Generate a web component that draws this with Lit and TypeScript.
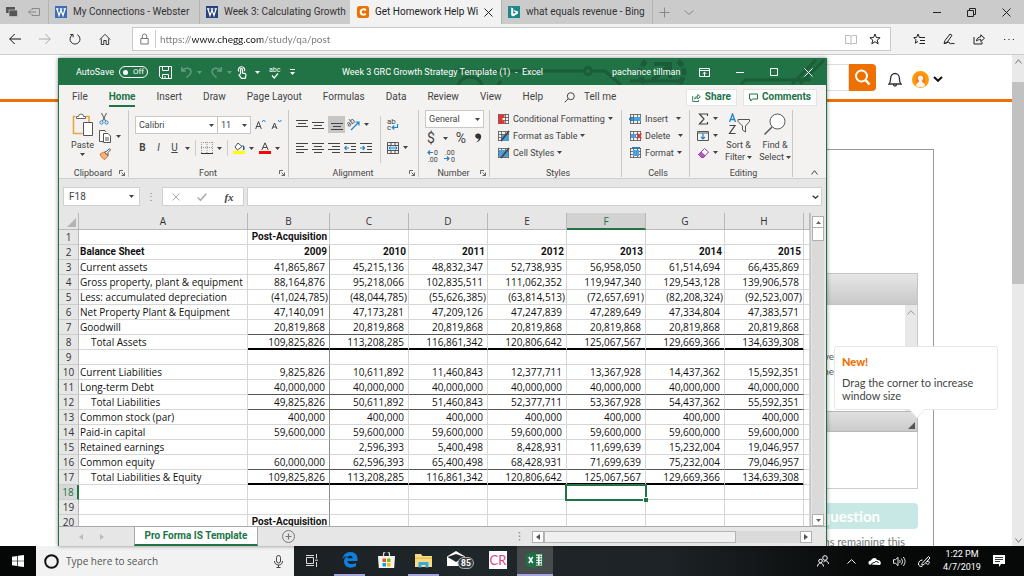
import { LitElement, html, css, svg, nothing } from "lit";
import { customElement } from "lit/decorators.js";
import { classMap } from "lit/directives/class-map.js";

type Row = { n: number; label?: string; bold?: boolean; indent?: boolean; vals?: string[]; line?: "thin" | "thick" };

const COLS = ["A", "B", "C", "D", "E", "F", "G", "H"];
const ROWS: Row[] = [
  { n: 1, bold: true, vals: ["Post-Acquisition"] },
  { n: 2, bold: true, label: "Balance Sheet", vals: ["2009", "2010", "2011", "2012", "2013", "2014", "2015"] },
  { n: 3, label: "Current assets", vals: ["41,865,867", "45,215,136", "48,832,347", "52,738,935", "56,958,050", "61,514,694", "66,435,869"] },
  { n: 4, label: "Gross property, plant & equipment", vals: ["88,164,876", "95,218,066", "102,835,511", "111,062,352", "119,947,340", "129,543,128", "139,906,578"] },
  { n: 5, label: "Less: accumulated depreciation", vals: ["(41,024,785)", "(48,044,785)", "(55,626,385)", "(63,814,513)", "(72,657,691)", "(82,208,324)", "(92,523,007)"] },
  { n: 6, label: "Net Property Plant & Equipment", vals: ["47,140,091", "47,173,281", "47,209,126", "47,247,839", "47,289,649", "47,334,804", "47,383,571"] },
  { n: 7, label: "Goodwill", line: "thin", vals: ["20,819,868", "20,819,868", "20,819,868", "20,819,868", "20,819,868", "20,819,868", "20,819,868"] },
  { n: 8, label: "Total Assets", indent: true, line: "thick", vals: ["109,825,826", "113,208,285", "116,861,342", "120,806,642", "125,067,567", "129,669,366", "134,639,308"] },
  { n: 9 },
  { n: 10, label: "Current Liabilities", vals: ["9,825,826", "10,611,892", "11,460,843", "12,377,711", "13,367,928", "14,437,362", "15,592,351"] },
  { n: 11, label: "Long-term Debt", line: "thin", vals: ["40,000,000", "40,000,000", "40,000,000", "40,000,000", "40,000,000", "40,000,000", "40,000,000"] },
  { n: 12, label: "Total Liabilities", indent: true, line: "thin", vals: ["49,825,826", "50,611,892", "51,460,843", "52,377,711", "53,367,928", "54,437,362", "55,592,351"] },
  { n: 13, label: "Common stock (par)", vals: ["400,000", "400,000", "400,000", "400,000", "400,000", "400,000", "400,000"] },
  { n: 14, label: "Paid-in capital", vals: ["59,600,000", "59,600,000", "59,600,000", "59,600,000", "59,600,000", "59,600,000", "59,600,000"] },
  { n: 15, label: "Retained earnings", vals: ["", "2,596,393", "5,400,498", "8,428,931", "11,699,639", "15,232,004", "19,046,957"] },
  { n: 16, label: "Common equity", line: "thin", vals: ["60,000,000", "62,596,393", "65,400,498", "68,428,931", "71,699,639", "75,232,004", "79,046,957"] },
  { n: 17, label: "Total Liabilities & Equity", indent: true, line: "thick", vals: ["109,825,826", "113,208,285", "116,861,342", "120,806,642", "125,067,567", "129,669,366", "134,639,308"] },
  { n: 18 },
  { n: 19 },
  { n: 20, bold: true, vals: ["Post-Acquisition"] },
];

const ico = (w: number, h: number, body: unknown) =>
  html`<svg class="ico" width=${w} height=${h} viewBox="0 0 ${w} ${h}" fill="none" stroke="currentColor" stroke-width="1" aria-hidden="true">${body}</svg>`;

const caret = () => ico(5, 3, svg`<path d="M0 0h5L2.5 3z" fill="currentColor" stroke="none"/>`);
const launcher = () => ico(6, 6, svg`<path d="M.5 4V.5H4M2.500 2.500l3 3M5.500 2.500v3h-3" stroke-width=".8"/>`);
const chevron = (w = 8, h = 5, up = false) =>
  ico(w, h, up ? svg`<path d="M.5 ${h - 0.5}L${w / 2} .7 ${w - 0.5} ${h - 0.5}"/>` : svg`<path d="M.5 .5L${w / 2} ${h - 0.7} ${w - 0.5} .5"/>`);
const cross = (s = 8) => ico(s, s, svg`<path d="M.5 .5l${s - 1} ${s - 1}M${s - 0.5} .5L.5 ${s - 0.5}"/>`);
const grid = (extra: unknown) => ico(13, 12, svg`<path d="M1 1.500h11M1 4.500h11M1 7.500h11M1 10.500h11M1.500 1v10M4.500 1v10M8.500 1v10M11.500 1v10" stroke="#555" stroke-width=".8"/>${extra}`);
const lines = (d: string) => ico(12, 12, svg`<path d=${d} stroke="#444"/>`);

const base = css`
  :host { box-sizing: border-box; font-family: Roboto, "Open Sans", sans-serif; font-size: 10px; line-height: 12px; }
  *, *::before, *::after { box-sizing: border-box; }
  button, input, select { font: inherit; color: inherit; background: none; border: 0; padding: 0; margin: 0; border-radius: 0; outline: 0; }
  button { display: flex; align-items: center; justify-content: center; white-space: nowrap; }
  a { color: inherit; text-decoration: none; }
  .ico { display: block; flex: none; }
`;

@customElement("edge-chrome")
export class EdgeChrome extends LitElement {
  static styles = [base, css`
    :host { display: block; color: #222; }
    .tabs { display: flex; height: 24px; background: #cbcbcb; }
    .lead { display: flex; width: 48px; padding-left: 6px; gap: 10px; align-items: center; color: #555; }
    .lead button:last-child { color: #888; }
    .tab { display: flex; align-items: center; gap: 6px; width: 151px; padding: 0 0 0 6px; border-left: 1px solid #b4b4b4; color: #333; }
    .tab .name { flex: 1; white-space: nowrap; }
    .tab.on { background: #f2f2f2; border-left-color: #f2f2f2; color: #222; padding-right: 8px; }
    .new { display: flex; gap: 14px; align-items: center; padding-left: 6px; border-left: 1px solid #b4b4b4; color: #888; flex: 1; }
    .win { display: flex; align-items: center; gap: 26px; padding-right: 13px; color: #222; }
    .bar { display: flex; align-items: center; height: 31px; background: #f2f2f2; border-bottom: 1px solid #ccc; color: #333; }
    .nav { display: flex; width: 132px; padding-left: 9px; gap: 18px; align-items: center; }
    .nav .off { color: #aaa; }
    .addr { flex: 1; display: flex; align-items: center; height: 24px; background: #fff; border: 1px solid #c9c9c9; padding: 0 9px 0 7px; gap: 6px; }
    .addr .sep { width: 1px; height: 18px; background: #ccc; }
    .addr input { flex: 1; min-width: 0; margin-left: -2px; height: 20px; font-family: Lato, sans-serif; color: transparent; background: linear-gradient(90deg, #777 0 32px, #111 32px 103px, #777 103px); background-clip: text; -webkit-background-clip: text; }
    .addr .faint { color: #bbb; }
    .addr .star { margin-left: 6px; }
    .tools { display: flex; gap: 18px; padding: 0 9px 0 22px; align-items: center; }
  `];
  render() {
    const wiki = svg`<rect width="12" height="12" fill="#3c6eb4" stroke="none"/>`;
    const W = svg`<path d="M2 3l2 6.500 2-5.500 2 5.500L10 3M1 2.800h2.500M4.800 2.800h2.500M8.600 2.800H11" stroke="#fff" stroke-width="1.200"/>`;
    return html`
      <nav class="tabs">
        <div class="lead">
          <button aria-label="Tabs set aside">${ico(12, 10, svg`<rect x="0" y="0" width="9" height="6" fill="currentColor" stroke="none"/><rect x="3" y="3" width="8.500" height="6.500" fill="currentColor" stroke="#cbcbcb" stroke-width=".7"/>`)}</button>
          <button aria-label="Set aside">${ico(12, 10, svg`<path d="M4 3V1.500h7.500v7H4V7M.5 5H8M2.800 2.800L.6 5l2.200 2.200"/>`)}</button>
        </div>
        <div class="tab">${ico(12, 12, svg`${wiki}${W}`)}<span class="name">My Connections - Webster</span></div>
        <div class="tab">${ico(12, 12, svg`<rect width="12" height="12" fill="#27407f" stroke="none"/>${W}`)}<span class="name">Week 3: Calculating Growth</span></div>
        <div class="tab on">${ico(12, 12, svg`<rect width="12" height="12" rx="2.500" fill="#eb7100" stroke="none"/><path d="M8.800 4.300C7.600 2.700 3.700 2.900 3.700 6s3.900 3.300 5.100 1.700" stroke="#fff" stroke-width="2"/>`)}<span class="name">Get Homework Help Wi</span><button aria-label="Close tab">${cross(9)}</button></div>
        <div class="tab">${ico(12, 12, svg`<rect width="12" height="12" fill="#19898a" stroke="none"/><path d="M3.200 1.500l2 .7v5.600L8 6.400 6 5.300l-.5-1.300L10 5.600v2L5.200 10.500l-2-1.200z" fill="#fff" stroke="none"/>`)}<span class="name">what equals revenue - Bing</span></div>
        <div class="new"><button aria-label="New tab">${ico(11, 11, svg`<path d="M5.500 .5v10M.5 5.500h10"/>`)}</button><button aria-label="Tab previews">${chevron(10, 5)}</button></div>
        <div class="win">
          <button aria-label="Minimize">${ico(8, 8, svg`<path d="M0 4.500h8"/>`)}</button>
          <button aria-label="Restore">${ico(9, 9, svg`<path d="M.5 2.500h6v6h-6zM2.500 2V.5h6v6H7"/>`)}</button>
          <button aria-label="Close">${cross(9)}</button>
        </div>
      </nav>
      <div class="bar">
        <div class="nav">
          <button aria-label="Back">${ico(12, 12, svg`<path d="M.7 6H12M5.700 1L.7 6l5 5" stroke="#111"/>`)}</button>
          <button class="off" aria-label="Forward">${ico(12, 12, svg`<path d="M0 6h11.300M6.300 1l5 5-5 5"/>`)}</button>
          <button aria-label="Refresh">${ico(12, 12, svg`<path d="M8.200 1.600a5 5 0 1 1-4.400 0M1.200 1.500h2.900v2.800" stroke="#333"/>`)}</button>
          <button aria-label="Home">${ico(12, 12, svg`<path d="M.8 6.500L6 1.300l5.200 5.200M2.300 5.500v6h2.500V7.500h2.400v4h2.500v-6" stroke="#333"/>`)}</button>
        </div>
        <div class="addr">
          ${ico(9, 12, svg`<path d="M.8 5.500h7.400v5.500H.8zM2.300 5.500V3.200a2.200 2.200 0 0 1 4.400 0v2.300" stroke="#777"/>`)}
          <span class="sep"></span>
          <input aria-label="Address" value="https://www.chegg.com/study/qa/post" />
          <button class="faint" aria-label="Reading view">${ico(12, 11, svg`<path d="M.5 1.500h4L6 2.200l1.500-.7h4v8h-4l-1.500.7-1.500-.7h-4zM6 2.200v8"/>`)}</button>
          <button class="star" aria-label="Add to favorites">${ico(12, 12, svg`<path d="M6 1l1.400 3.500 3.700.2-2.900 2.400 1 3.700L6 8.700l-3.200 2.100 1-3.700L.9 4.700l3.700-.2z" stroke="#222"/>`)}</button>
        </div>
        <div class="tools">
          <button aria-label="Favorites">${ico(12, 12, svg`<path d="M8 4.500L6.300 4.300 5 1 3.700 4.300.8 4.600 3 6.800l-.7 3.400L5 8.500M6.500 4.500H12M7 7.500h5M6.500 10.500H12" stroke="#222"/>`)}</button>
          <button aria-label="Notes">${ico(12, 12, svg`<path d="M1 10.500l1-3L7 1l2 1.300L4.300 9 1 10.500c2 .6 4-1.800 5-1.400s0 1.700 1.200 1.700S9 10 11.500 10.700" stroke="#222"/>`)}</button>
          <button aria-label="Share">${ico(12, 12, svg`<path d="M1 4v7h8V9M3.500 8c.3-3 2-4 4.300-4V1.800l3.700 3.400-3.700 3.400V6.500C6 6.500 4.500 7 3.500 8z" stroke="#222"/>`)}</button>
          <button aria-label="More">${ico(12, 3, svg`<path d="M1 1.500h1.200M5.400 1.500h1.200M9.800 1.500H11"/>`)}</button>
        </div>
      </div>`;
  }
}

@customElement("chegg-page")
export class CheggPage extends LitElement {
  static styles = [base, css`
    :host { display: flex; background: #fff; overflow: hidden; font-family: Lato, sans-serif; font-size: 11px; }
    main { flex: 1; min-width: 0; }
    header { display: flex; align-items: center; justify-content: flex-end; height: 47px; padding: 1px 69px 0 0; border-bottom: 3px solid #ed7000; }
    .find { display: flex; height: 27px; width: 500px; }
    .find input { flex: 1; border: 1px solid #ddd; }
    .find button { width: 27px; background: #ed7000; border-radius: 0 4px 4px 0; }
    .bell { margin: 4px 0 0 12px; }
    .user { margin: 3px 0 0 10px; gap: 4px; color: #111; }
    .card { margin: 47px 78px 0 90px; height: 420px; border: 1px solid #999; padding: 123px 15px 0 0; }
    .bar { height: 32px; border: 1px solid #c4c4c4; background: linear-gradient(#e6e6e6, #c9c9c9); }
    .edit { display: flex; height: 106px; border-right: 1px solid #ccc; }
    .edit p { flex: 1; margin: 44px 71px 0 0; text-align: right; line-height: 15px; font-size: 10px; color: #555; }
    .sb { width: 12px; background: #e8e8e8; padding: 5px 2px; color: #999; }
    .grip { display: flex; align-items: flex-end; justify-content: flex-end; height: 21px; padding: 2px; border: 1px solid #b8b8b8; border-width: 1px 1px 1px 0; background: linear-gradient(#e0e0e0, #cbcbcb); color: #555; }
    .out { height: 57px; border: 1px solid #ccc; border-top: 0; }
    .ask { width: 100%; height: 26px; margin-top: 14px; padding-right: 38px; justify-content: flex-end; background: #c8e8e6; border-radius: 4px; color: #fff; font-weight: 700; font-size: 15px; line-height: 20px; }
    .left { margin: 7px 13px 0 0; text-align: right; color: #777; }
    .scroll { width: 12px; background: #e9e9e9; display: flex; flex-direction: column; align-items: center; color: #777; padding: 4px 0 3px; gap: 18px; }
    .thumb { width: 12px; height: 202px; background: #c1c1c1; }
    .scroll > :last-child { margin-top: auto; }
  `];
  render() {
    return html`
      <main>
        <header>
          <div class="find"><input aria-label="Search" /><button aria-label="Search">${ico(17, 17, svg`<circle cx="7.500" cy="7" r="5.500" stroke="#fff" stroke-width="2"/><path d="M11.500 11l4 4.500" stroke="#fff" stroke-width="2.500"/>`)}</button></div>
          <button class="bell" aria-label="Notifications">${ico(14, 15, svg`<path d="M1 12h12c-1.500-1.500-1.600-2.500-1.600-5.500C11.400 3.500 9.500 1.500 7 1.500S2.600 3.500 2.600 6.500C2.600 9.500 2.500 10.500 1 12zM5.500 12.500a1.500 1.500 0 0 0 3 0" stroke="#333" stroke-width="1.300"/>`)}</button>
          <button class="user" aria-label="Account">${ico(17, 17, svg`<circle cx="8.500" cy="8.500" r="8.500" fill="#ff9a05" stroke="none"/><path d="M4 14.500V8a4.500 4.500 0 0 1 9 0v6.500z" fill="#f47a2a" stroke="none"/><path d="M8.500 4.500a2.700 2.700 0 0 1 1.600 4.900v1.500l2 1.400c.6.500.9 2 .9 2.600-2.800 1.700-6.200 1.700-9 0 0-.6.300-2.100.9-2.600l2-1.400V9.400a2.700 2.700 0 0 1 1.600-4.900z" fill="#fff4e2" stroke="none"/>`)}${ico(10, 6, svg`<path d="M1 1l4 3.800L9 1" stroke-width="2"/>`)}</button>
        </header>
        <section class="card">
          <div class="bar"></div>
          <div class="edit"><p>Explain how we<br />arrived at the ne</p><div class="sb">${chevron(8, 5, true)}</div></div>
          <div class="grip">${ico(7, 7, svg`<path d="M7 0v7H0z" fill="currentColor" stroke="none"/>`)}</div>
          <div class="out"></div>
          <button class="ask">Submit question</button>
          <div class="left">questions remaining this</div>
        </section>
      </main>
      <div class="scroll">${chevron(7, 5, true)}<div class="thumb"></div>${chevron(7, 5)}</div>`;
  }
}

@customElement("excel-window")
export class ExcelWindow extends LitElement {
  static styles = [base, css`
    :host { display: flex; flex-direction: column; background: #e6e6e6; border: 1px solid #217346; border-bottom: 0; box-shadow: 0 0 4px rgba(0, 0, 0, .45); color: #444; overflow: hidden; }
    .title { position: relative; display: flex; align-items: center; height: 26px; background: #217346; color: #fff; font-size: 9px; }
    .deco { position: absolute; right: 0; top: 0; }
    .title > :not(.deco) { position: relative; }
    .quick { display: flex; align-items: center; padding-left: 17px; width: 283px; gap: 9px; }
    .quick .dim { opacity: .3; }
    .quick .pair { gap: 5px; }
    .quick .touch { margin-left: -4px; gap: 8px; }
    .toggle { margin: 0 2px 0 -4px; width: 29px; height: 12px; border: 1px solid #fff; border-radius: 6px; gap: 5px; font-size: 8px; line-height: 10px; }
    .doc { width: 270px; white-space: pre; }
    .user { flex: 1; white-space: nowrap; }
    .ctl { display: flex; gap: 26px; padding-right: 13px; }
    .menu { display: flex; align-items: center; height: 24px; padding: 0 9px 0 13px; background: #f3f2f1; gap: 21px; }
    .menu button { height: 22px; }
    .menu .on { color: #217346; font-weight: 700; border-bottom: 2px solid #217346; height: 18px; margin-top: 2px; }
    .menu .tell { gap: 9px; }
    .menu .act { height: 17px; padding: 0 5px; background: #fff; border: 1px solid #e4e4e4; color: #217346; font-weight: 700; gap: 4px; }
    .menu .acts { display: flex; gap: 6px; margin-left: auto; }
    .ribbon { display: flex; height: 70px; padding-top: 1px; background: #f3f2f1; border-bottom: 1px solid #d0d0d0; font-size: 9px; line-height: 12px; }
    .grp { display: flex; flex-direction: column; justify-content: space-between; border-right: 1px solid #c8c8c8; margin-bottom: 1px; }
    .grp footer { display: flex; align-items: center; justify-content: center; height: 8px; line-height: 8px; padding: 0 3px 0 8px; }
    .grp footer span { flex: 1; text-align: center; }
    .body { display: flex; flex: 1; min-height: 0; }
    .col { display: flex; flex-direction: column; align-items: flex-start; }
    .row { display: flex; align-items: center; }
    .clip { width: 70px; } .font { width: 160px; } .align { width: 130px; } .num { width: 71px; } .sty { width: 132px; } .cells { width: 68px; } .edit { width: 103px; }
    .clip .body { padding: 3px 0 0 12px; gap: 5px; }
    .paste { flex-direction: column; gap: 2px; justify-content: flex-start; height: 50px; }
    .clip .col { gap: 5px; }
    .drop { gap: 4px; }
    .combo { display: flex; align-items: center; height: 18px; padding: 0 3px; background: #fff; border: 1px solid #c8c8c8; }
    .combo select { flex: 1; min-width: 0; width: 0; appearance: none; }
    .font .col { padding: 6px 0 0 6px; gap: 6px; }
    .font .name { width: 83px; } .font .size { width: 34px; margin-left: -1px; }
    .font .grow, .font .shrink { margin-left: 4px; }
    .fmt { gap: 5px; padding-left: 2px; height: 16px; font-size: 10px; }
    .fmt .ch { width: 11px; }
    .sep { width: 1px; height: 16px; background: #ccc; }
    .align .body { padding: 6px 0 6px 7px; }
    .align .col { gap: 6px; }
    .align .row { gap: 4px; height: 17px; }
    .align .hot { background: #c6c6c6; width: 17px; height: 17px; margin: 0 -2px 0 0; }
    .align .side { border-left: 1px solid #ccc; padding-left: 6px; margin-left: 8px; }
    .num .body { padding: 0 0 0 6px; }
    .num .col { gap: 3px; }
    .num .combo { width: 59px; }
    .num .row { width: 57px; justify-content: space-between; font-size: 14px; line-height: 14px; height: 14px; padding-left: 2px; }
    .num .dec { justify-content: flex-start; gap: 4px; }
    .list { gap: 4px; padding: 2px 0 0 7px; }
    .list button { height: 13px; gap: 3px; }
    .edit .list { padding: 2px 0 0 7px; }
    .edit .body { gap: 7px; }
    .tall { flex-direction: column; gap: 4px; height: 52px; padding-top: 3px; justify-content: flex-start; line-height: 12px; }
    .tall .row { gap: 2px; }
    .end { flex: 1; display: flex; align-items: flex-end; justify-content: flex-end; padding: 0 8px 3px 0; }
    .fx { display: flex; height: 34px; padding: 8px 4px 7px 4px; gap: 4px; }
    .fx .box { display: flex; align-items: center; height: 19px; background: #fff; border: 1px solid #d0d0d0; }
    .fx .nm { width: 77px; padding: 0 5px; }
    .fx .nm input, .fx .formula input { flex: 1; min-width: 0; width: 0; }
    .fx .dots { width: 14px; text-align: center; line-height: 19px; color: #888; }
    .fx .btns { width: 82px; gap: 17px; justify-content: center; color: #aaa; }
    .fx .btns button:last-child { color: #444; font-family: "Liberation Serif", serif; font-style: italic; font-weight: 700; font-size: 11px; }
    .fx .formula { flex: 1; padding-right: 2px; margin-left: -1px; }
    .sheet { display: flex; flex: 1; min-height: 0; overflow: hidden; }
    .cellsbox { flex: 1; min-width: 0; overflow: hidden; background: #e6e6e6; border-right: 1px solid #c4c4c4; }
    table { width: 100%; table-layout: fixed; border-collapse: separate; border-spacing: 0; color: #111; font-family: "Open Sans", sans-serif; line-height: 14px; }
    .c0 { width: 20px; } .cB { width: 82px; } .cN { width: 79px; } .cZ { width: 6px; }
    th, td { height: 15px; padding: 0; border: 0 solid #d6d6d6; border-width: 0 1px 1px 0; white-space: nowrap; }
    td { background: #fff; text-align: right; padding-right: 4px; }
    th { background: #e6e6e6; border-color: #b8b8b8; font-weight: 400; color: #333; text-align: center; }
    thead th { height: 17px; }
    tbody th { border-bottom-color: #cdcdcd; }
    thead .sel { background: #d2d2d2; color: #217346; border-bottom: 2px solid #217346; }
    tbody .sel { background: #d8d8d8; color: #217346; border-right: 2px solid #217346; }
    td.lab { text-align: left; padding: 0 0 0 1px; }
    td.ind { padding-left: 12px; }
    td.bold { font-family: Roboto, sans-serif; font-weight: 700; padding-right: 2px; }
    td.neg { padding-right: 1px; }
    td.frz { border-right-color: #8c8c8c; }
    td.thin { border-bottom-color: #555; }
    td.thick { border-bottom-color: #000; box-shadow: inset 0 -1px #000; }
    td.cur { position: relative; }
    td.cur::before { content: ""; position: absolute; inset: -1px -2px -2px -2px; border: 2px solid #217346; z-index: 1; }
    td.cur::after { content: ""; position: absolute; right: -3px; bottom: -3px; width: 5px; height: 5px; background: #217346; border: 1px solid #fff; border-width: 1px 0 0 1px; z-index: 2; }
    .tri { display: block; margin: 3px 2px 0 auto; }
    .vs { width: 15px; padding: 3px 2px 0 1px; display: flex; flex-direction: column; }
    .sbtn { width: 12px; height: 12px; flex: none; background: #fff; border: 1px solid #b0b0b0; color: #666; }
    .vs .thumb { height: 13px; background: #fff; border: 1px solid #b0b0b0; border-top: 0; }
    .vs .track { flex: 1; background: #dadada; }
    .foot { display: flex; align-items: center; height: 20px; border-top: 1px solid #aaa; color: #bbb; }
    .foot .arr { display: flex; width: 75px; padding-left: 20px; gap: 17px; }
    .foot .tab { width: 124px; height: 19px; background: #fff; border: 1px solid #aaa; border-top: 0; border-bottom: 2px solid #217346; color: #217346; font-weight: 700; }
    .foot .add { margin-left: 24px; color: #777; }
    .foot .hs { display: flex; align-items: center; width: 280px; margin-right: 14px; }
    .foot .dots { margin-left: auto; width: 14px; color: #999; }
    .hs .thumb { width: 192px; height: 12px; background: #f0f0f0; border: 1px solid #b4b4b4; }
    .hs .track { flex: 1; height: 12px; background: #dadada; }
  `];

  private cell(r: Row, i: number) {
    const v = r.vals?.[i] ?? "";
    return html`<td class=${classMap({ bold: !!r.bold, neg: v.startsWith("("), frz: i === 0 && r.n > 1, thin: r.line === "thin", thick: r.line === "thick", cur: r.n === 18 && i === 4 })}>${v}</td>`;
  }

  render() {
    const tabs = ["File", "Home", "Insert", "Draw", "Page Layout", "Formulas", "Data", "Review", "View", "Help"];
    const blue = "#2583c5";
    return html`
      <div class="title">
        <svg class="deco" width="380" height="26" viewBox="0 0 380 26" fill="none" stroke="#1a5d38" stroke-width="3" aria-hidden="true">
          <path d="M8 12h129M147 12h12l16 14M184 22h54" /><circle cx="142" cy="12" r="3.500" /><path d="M12 26a13 13 0 0 1 24 0M52 26l3-4" />
          <path d="M200 2c-8 7-8 16 0 24M232 2c8 7 8 16 0 24" stroke-width="5" stroke-dasharray="7 2" /><path d="M206 22l16-15M208 5h16v14" stroke-width="4" />
          <path d="M295 25l4-4h66M346 25l24-24M354 25l24-24" />
        </svg>
        <div class="quick">
          <span>AutoSave</span>
          <button class="toggle" role="switch" aria-checked="false" aria-label="AutoSave">${ico(5, 5, svg`<circle cx="2.500" cy="2.500" r="2.500" fill="#fff" stroke="none"/>`)}Off</button>
          <button aria-label="Save">${ico(13, 13, svg`<path d="M.5 .5h12v12H2.500l-2-2zM3.500 .5v4h6v-4M3.500 12.500v-4h6v4M6 10v2.500"/>`)}</button>
          <button class="pair dim" aria-label="Undo">${ico(11, 12, svg`<path d="M.8 1v4h4M1 5c3-4 9-3.500 9 1 0 2.500-2 3.500-4.500 5.500" stroke-width="1.400"/>`)}${caret()}</button>
          <button class="pair dim" aria-label="Redo">${ico(11, 12, svg`<path d="M10.200 1v4h-4M10 5C7 1 1 1.500 1 6c0 2.500 2 3.500 4.500 5.500" stroke-width="1.400"/>`)}${caret()}</button>
          <button class="pair touch" aria-label="Touch mode">${ico(10, 13, svg`<path d="M3.500 8V3.500a1 1 0 0 1 2 0V7l3 .7c.6.200.6 1 .4 2l-.7 2.600H4.500L2 9.200c.2-.8.900-.8 1.500-.2M1.700 5.500a3.200 3.200 0 1 1 5.800-.4" stroke-width="1.200"/>`)}${caret()}</button>
          <button aria-label="Spelling">${ico(12, 13, svg`<text x="0" y="5.500" font-size="7" fill="#fff" stroke="none">abc</text><path d="M3 9.500l2.200 2.500L9 7.500" stroke-width="1.200"/>`)}</button>
          <button aria-label="Customize Quick Access Toolbar">${ico(5, 6, svg`<path d="M0 .5h5"/><path d="M0 3h5L2.500 6z" fill="#fff" stroke="none"/>`)}</button>
        </div>
        <div class="doc">Week 3 GRC Growth Strategy Template (1)  -  Excel</div>
        <div class="user">pachance tillman</div>
        <div class="ctl">
          <button aria-label="Ribbon Display Options">${ico(11, 9, svg`<path d="M.5 .5h10v8H.5zM.5 2.500h10M5.500 8V4.300M3.700 5.900l1.800-1.800 1.800 1.800"/>`)}</button>
          <button aria-label="Minimize">${ico(8, 8, svg`<path d="M0 4.500h8"/>`)}</button>
          <button aria-label="Maximize">${ico(8, 8, svg`<path d="M.5 .5h7v7h-7z"/>`)}</button>
          <button aria-label="Close">${cross(9)}</button>
        </div>
      </div>
      <nav class="menu">
        ${tabs.map((t) => html`<button class=${t === "Home" ? "on" : ""}>${t}</button>`)}
        <button class="tell">${ico(11, 11, svg`<circle cx="6.800" cy="4.200" r="3.500"/><path d="M4.300 6.700L.7 10.300"/>`)}Tell me</button>
        <div class="acts">
          <button class="act">${ico(9, 9, svg`<path d="M.7 3v5.500h6V7M2.700 6c.3-2 1.300-2.700 3-2.700V1.500l2.700 2.300L5.700 6V4.700C4.500 4.700 3.500 5 2.700 6z" stroke-width=".9"/>`)}Share</button>
          <button class="act">${ico(9, 9, svg`<path d="M.5 1h8v5h-5L1.700 8V6H.5z"/>`)}Comments</button>
        </div>
      </nav>
      <div class="ribbon">
        <section class="grp clip">
          <div class="body">
            <button class="paste">${ico(23, 24, svg`<path d="M4.500 3.500H2.500v17h9M15 3.500h3V9" stroke="#e9a544" stroke-width="1.600"/><path d="M5.500 5.500V3.500h2a2.200 2.200 0 0 1 5 0h2v2z" fill="#fff" stroke="#666"/><path d="M12.500 9.500h9v13h-9z" fill="#fff" stroke="#555"/>`)}<span>Paste</span>${caret()}</button>
            <div class="col">
              <button aria-label="Cut">${ico(10, 12, svg`<path d="M2.500 0l4 8M7.500 0l-4 8" stroke="#555"/><circle cx="2.500" cy="9.500" r="1.600" stroke=${blue}/><circle cx="7.500" cy="9.500" r="1.600" stroke=${blue}/>`)}</button>
              <button class="drop" aria-label="Copy">${ico(13, 13, svg`<path d="M4.500 11.500h-4V.5H6l1 1.500" fill="#fff" stroke="#555"/><path d="M4.500 3.500H9l2.500 2.500v6.500h-7zM6 8h4M6 10h4" fill="#fff" stroke="#555"/>`)}${caret()}</button>
              <button aria-label="Format Painter">${ico(12, 12, svg`<path d="M1 6l4-2 4 4-3 3.500C4 11 1.500 8.500 1 6z" fill="#f4b183" stroke="#e07b2a"/><path d="M5.500 4L8 3l2.500-2.300L11.500 2 9 4.500 9 7.500z" fill="#fff" stroke="#555"/>`)}</button>
            </div>
          </div>
          <footer><span>Clipboard</span>${launcher()}</footer>
        </section>
        <section class="grp font">
          <div class="body col">
            <div class="row">
              <label class="combo name"><select aria-label="Font"><option>Calibri</option></select>${caret()}</label>
              <label class="combo size"><select aria-label="Font size"><option>11</option></select>${caret()}</label>
              <button class="grow" aria-label="Increase Font Size">${ico(12, 12, svg`<path d="M.7 10L3.500 2.500 6.300 10M1.800 7.500h3.500" stroke="#444"/><path d="M7 3l1.700-2 1.700 2" stroke=${blue}/>`)}</button>
              <button class="shrink" aria-label="Decrease Font Size">${ico(12, 12, svg`<path d="M1 10l2.500-6L6 10M2 8h3" stroke="#444"/><path d="M7 1l1.700 2 1.700-2" stroke=${blue}/>`)}</button>
            </div>
            <div class="row fmt">
              <button class="ch"><b>B</b></button><button class="ch"><i>I</i></button><button class="ch"><u>U</u></button>${caret()}
              <span class="sep"></span>
              <button class="drop" aria-label="Borders">${ico(12, 12, svg`<path d="M.5 0v11M6 0v11M11.500 0v11M0 .5h12M0 5.500h12" stroke="#999" stroke-dasharray="1 1"/><path d="M0 11.500h12" stroke="#333"/>`)}${caret()}</button>
              <span class="sep"></span>
              <button class="drop" aria-label="Fill Color">${ico(12, 12, svg`<path d="M5 1l4 3.500-4.500 3.500L2 5z" fill="#fff" stroke="#555"/><path d="M9.500 3.500c1.500 1 1.800 2.500 1 4.500" stroke="#1a5fa0" stroke-width="1.500"/><path d="M0 10.500h12" stroke="#ff0" stroke-width="3"/>`)}${caret()}</button>
              <button class="drop" aria-label="Font Color">${ico(12, 12, svg`<path d="M2.800 8L6 .8 9.200 8M4 5.500h4" stroke="#444"/><path d="M0 10.500h12" stroke="#f00" stroke-width="3"/>`)}${caret()}</button>
            </div>
          </div>
          <footer><span>Font</span>${launcher()}</footer>
        </section>
        <section class="grp align">
          <div class="body">
            <div class="col">
              <div class="row">
                <button aria-label="Top Align">${lines("M0 1.500h12M2 4.500h8M0 7.500h12")}</button>
                <button aria-label="Middle Align">${lines("M0 3.500h12M2 6.500h8M0 9.500h12")}</button>
                <button class="hot" aria-label="Bottom Align">${lines("M0 4.500h12M2 7.500h8M0 10.500h12")}</button>
                <button class="drop" aria-label="Orientation">${ico(13, 13, svg`<text x="0" y="7" font-size="8" fill="#444" stroke="none" transform="rotate(-38 4 6)">ab</text><path d="M4 12l8-8M8.500 4H12v3.500" stroke=${blue} stroke-width="1.200"/>`)}${caret()}</button>
              </div>
              <div class="row">
                <button aria-label="Align Left">${lines("M0 1.500h12M0 4.500h8M0 7.500h12M0 10.500h8")}</button>
                <button aria-label="Center">${lines("M0 1.500h12M2 4.500h8M0 7.500h12M2 10.500h8")}</button>
                <button aria-label="Align Right">${lines("M0 1.500h12M4 4.500h8M0 7.500h12M4 10.500h8")}</button>
                <button aria-label="Decrease Indent">${ico(12, 12, svg`<path d="M0 1.500h12M7 4.500h5M7 7.500h5M0 10.500h12" stroke="#444"/><path d="M.7 6H5M2.500 4L.7 6l1.800 2" stroke=${blue} stroke-width="1.200"/>`)}</button>
                <button aria-label="Increase Indent">${ico(12, 12, svg`<path d="M0 1.500h12M7 4.500h5M7 7.500h5M0 10.500h12" stroke="#444"/><path d="M0 6h4.500M2.800 4l1.800 2-1.800 2" stroke=${blue} stroke-width="1.200"/>`)}</button>
              </div>
            </div>
            <div class="col side">
              <div class="row"><button aria-label="Wrap Text">${ico(12, 13, svg`<text x="0" y="6" font-size="8" fill="#444" stroke="none">ab</text><text x="0" y="12" font-size="8" fill="#444" stroke="none">c</text><path d="M10.500 6v3.500H5.500M7.300 7.500l-2 2 2 2" stroke=${blue} stroke-width="1.200"/>`)}</button></div>
              <div class="row"><button class="drop" aria-label="Merge and Center">${ico(12, 12, svg`<path d="M.5 .5h11v11H.5zM.5 3.500h11M.5 8.500h11M4 0v3.500M8 0v3.500M4 8.500v3M8 8.500v3" stroke="#555"/><path d="M1 4h10v4H1z" fill="#cfe6f7" stroke="none"/><path d="M2 6h8M3.500 4.500L2 6l1.500 1.500M8.500 4.500L10 6 8.500 7.500" stroke=${blue}/>`)}${caret()}</button></div>
            </div>
          </div>
          <footer><span>Alignment</span>${launcher()}</footer>
        </section>
        <section class="grp num">
          <div class="body col">
            <label class="combo"><select aria-label="Number format"><option>General</option></select>${caret()}</label>
            <div class="row"><button>$</button>${caret()}<button>%</button><button aria-label="Comma Style">${ico(8, 12, svg`<path d="M4 1.500a2.600 2.600 0 1 0 .8 5C4.500 8.200 3.500 9.500 2 10.500c3-.8 5.200-3 5.200-6C7.200 2.700 5.800 1.500 4 1.500z" fill="#333" stroke="none"/>`)}</button></div>
            <div class="row dec">
              <button aria-label="Increase Decimal">${ico(13, 13, svg`<path d="M1 3.500h5M3 1.500l-2 2 2 2" stroke=${blue} stroke-width="1.200"/><text x="7" y="6" font-size="7" fill="#444" stroke="none">0</text><text x="1" y="12.500" font-size="7" fill="#444" stroke="none">.00</text>`)}</button>
              <button aria-label="Decrease Decimal">${ico(13, 13, svg`<text x="1" y="6" font-size="7" fill="#444" stroke="none">.00</text><path d="M0 9.500h5M3 7.500l2 2-2 2" stroke=${blue} stroke-width="1.200"/><text x="7" y="12.500" font-size="7" fill="#444" stroke="none">0</text>`)}</button>
            </div>
          </div>
          <footer><span>Number</span>${launcher()}</footer>
        </section>
        <section class="grp sty">
          <div class="body col list">
            <button>${grid(svg`<path d="M2 2h5v2H2zM2 5h3v2H2zM2 8h5v2.500H2z" fill="#e3342f" stroke="#e3342f"/>`)}Conditional Formatting ${caret()}</button>
            <button>${grid(svg`<path d="M5 5h7v6H5z" fill="#4aa0dc" stroke="none"/><path d="M12 1L6 8.500l-2 2.500" stroke="#444" stroke-width="1.800"/>`)}Format as Table ${caret()}</button>
            <button>${grid(svg`<path d="M2 3h9v7H2z" fill="#4aa0dc" stroke="none"/><path d="M12 1L6 8.500l-2 2.500" stroke="#444" stroke-width="1.800"/>`)}Cell Styles ${caret()}</button>
          </div>
          <footer><span>Styles</span></footer>
        </section>
        <section class="grp cells">
          <div class="body col list">
            <button>${grid(svg`<path d="M5 4h7v4H5z" fill="#4aa0dc" stroke="none"/><path d="M0 6h5M2.500 4L.5 6l2 2" stroke="#1478c8" stroke-width="1.400"/>`)}Insert &nbsp;${caret()}</button>
            <button>${grid(svg`<path d="M2 4h5v4H2z" fill="#4aa0dc" stroke="none"/><path d="M8 3.500l4.500 5M12.500 3.500l-4.500 5" stroke="#e3342f" stroke-width="1.500"/>`)}Delete &nbsp;${caret()}</button>
            <button>${grid(svg`<path d="M4 3h6v6H4z" fill="#4aa0dc" stroke="none"/><path d="M3 .8h8" stroke="#1478c8" stroke-width="1.500"/>`)}Format ${caret()}</button>
          </div>
          <footer><span>Cells</span></footer>
        </section>
        <section class="grp edit">
          <div class="body">
            <div class="col list">
              <button aria-label="AutoSum">${ico(13, 12, svg`<path d="M10.500 3V1H2.500L7 6l-4.500 5h8V9" stroke="#444" stroke-width="1.200"/>`)}${caret()}</button>
              <button aria-label="Fill">${ico(13, 12, svg`<path d="M.5 1.500h11v9H.5zM.5 3h11" stroke="#555"/><path d="M6 3.500v5.500M4 7l2 2 2-2" stroke=${blue} stroke-width="1.200"/>`)}${caret()}</button>
              <button aria-label="Clear">${ico(13, 12, svg`<path d="M7.500 1.500l4 3.500-5 5.500H4.500l-3-3z" fill="#fff" stroke="#9a3fa8"/><path d="M4 5l4 3.700-1.700 1.800H4.500l-3-3z" fill="#b45cc0" stroke="#9a3fa8"/>`)}${caret()}</button>
            </div>
            <button class="tall">${ico(22, 22, svg`<path d="M1.500 9L4.500 1l3 8M2.500 6.500h4" stroke=${blue} stroke-width="1.300"/><path d="M1.500 12.500h5.500l-5.500 8h6" stroke="#444" stroke-width="1.200"/><path d="M10 6.500h11.500v2L17.500 13v6l-3-2v-4L10 8.500z" stroke="#555"/>`)}<div><div>Sort &amp;</div><div class="row">Filter ${caret()}</div></div></button>
            <button class="tall">${ico(24, 22, svg`<circle cx="14.500" cy="8.500" r="7.500" stroke="#555" fill="#fff"/><path d="M9 14l-7.500 7.500" stroke="#555" stroke-width="1.400"/>`)}<div><div>Find &amp;</div><div class="row">Select ${caret()}</div></div></button>
          </div>
          <footer><span>Editing</span></footer>
        </section>
        <div class="end"><button aria-label="Collapse ribbon">${chevron(7, 5, true)}</button></div>
      </div>
      <div class="fx">
        <label class="box nm"><input aria-label="Name Box" value="F18" />${caret()}</label>
        <span class="dots">⋮</span>
        <div class="box btns">
          <button aria-label="Cancel">${cross(8)}</button>
          <button aria-label="Enter">${ico(10, 8, svg`<path d="M.7 4.500L3.500 7.300 9.300 .7" stroke-width="1.500"/>`)}</button>
          <button aria-label="Insert Function">fx</button>
        </div>
        <label class="box formula"><input aria-label="Formula bar" />${ico(7, 4, svg`<path d="M.7 .7l2.800 2.400L6.300 .7" stroke-width="1.500"/>`)}</label>
      </div>
      <div class="sheet">
        <div class="cellsbox">
          <table>
            <colgroup><col class="c0" /><col /><col class="cB" />${[0, 1, 2, 3, 4, 5].map(() => html`<col class="cN" />`)}<col class="cZ" /></colgroup>
            <thead><tr><th aria-label="Select all">${html`<svg class="tri" width="9" height="9" viewBox="0 0 9 9" aria-hidden="true"><path d="M9 0v9H0z" fill="#b4b4b4" /></svg>`}</th>${COLS.map((c) => html`<th scope="col" class=${c === "F" ? "sel" : ""}>${c}</th>`)}<th></th></tr></thead>
            <tbody>
              ${ROWS.map((r) => html`<tr><th scope="row" class=${r.n === 18 ? "sel" : ""}>${r.n}</th><td class=${classMap({ lab: true, ind: !!r.indent, bold: !!r.bold })}>${r.label ?? nothing}</td>${[0, 1, 2, 3, 4, 5, 6].map((i) => this.cell(r, i))}<td></td></tr>`)}
            </tbody>
          </table>
        </div>
        <div class="vs">
          <button class="sbtn" aria-label="Scroll up">${ico(5, 3, svg`<path d="M0 3h5L2.500 0z" fill="currentColor" stroke="none"/>`)}</button>
          <div class="thumb"></div><div class="track"></div>
          <button class="sbtn" aria-label="Scroll down">${caret()}</button>
        </div>
      </div>
      <div class="foot">
        <div class="arr">${ico(4, 6, svg`<path d="M4 0v6L0 3z" fill="currentColor" stroke="none"/>`)}${ico(4, 6, svg`<path d="M0 0v6l4-3z" fill="currentColor" stroke="none"/>`)}</div>
        <button class="tab">Pro Forma IS Template</button>
        <button class="add" aria-label="New sheet">${ico(13, 13, svg`<circle cx="6.500" cy="6.500" r="6"/><path d="M6.500 3.500v6M3.500 6.500h6" stroke-width="1.200"/>`)}</button>
        <span class="dots">${ico(3, 9, svg`<path d="M1.500 0v9" stroke-width="1.500" stroke-dasharray="1.500 2"/>`)}</span>
        <div class="hs">
          <button class="sbtn" aria-label="Scroll left">${ico(4, 6, svg`<path d="M4 0v6L0 3z" fill="#555" stroke="none"/>`)}</button>
          <div class="thumb"></div><div class="track"></div>
          <button class="sbtn" aria-label="Scroll right">${ico(4, 6, svg`<path d="M0 0v6l4-3z" fill="#555" stroke="none"/>`)}</button>
        </div>
      </div>`;
  }
}

@customElement("task-bar")
export class TaskBar extends LitElement {
  static styles = [base, css`
    :host { display: flex; height: 30px; background: linear-gradient(90deg, #101315 0, #20272a 45%, #1d2326 65%, #070808 85%); color: #fff; }
    .start { width: 36px; background: #050606; }
    .search { display: flex; align-items: center; width: 258px; padding: 0 11px 0 8px; gap: 7px; background: #f2f2f2; color: #444; }
    .search input { flex: 1; min-width: 0; height: 20px; font-family: "Open Sans", sans-serif; }
    .search input::placeholder { color: #555; opacity: 1; }
    .app { width: 37px; padding: 0 3px; }
    .app span { display: flex; align-items: center; justify-content: center; width: 31px; height: 30px; border-bottom: 2px solid transparent; }
    .app.open span { border-color: #a5a4dd; }
    .app.on { padding: 0; }
    .app.on span { width: 36px; background: #474b4c; border-color: #a5a4dd; }
    .tray { display: flex; align-items: center; margin-left: auto; gap: 12px; padding-right: 19px; }
    .people { margin-right: 6px; }
    .clock { font-size: 9px; line-height: 13px; text-align: center; flex-direction: column; width: 38px; }
  `];
  render() {
    const app = (label: string, icon: unknown, cls = "") => html`<button class="app ${cls}" aria-label=${label}><span>${icon}</span></button>`;
    return html`
      <button class="start" aria-label="Start">${ico(12, 12, svg`<path d="M0 1.700l5.300-.8v4.800H0zM6 .8L12 0v5.700H6zM0 6.300h5.300v4.800L0 10.300zM6 6.300h6V12l-6-.8z" fill="#fff" stroke="none"/>`)}</button>
      <label class="search">${ico(15, 15, svg`<circle cx="7.500" cy="7.500" r="6.300" stroke="#111" stroke-width="2"/>`)}<input aria-label="Search" placeholder="Type here to search" />${ico(9, 13, svg`<rect x="2.500" y=".5" width="4" height="7.500" rx="2"/><path d="M.5 6c0 2.500 1.500 4 4 4s4-1.500 4-4M4.500 10v2.500M2.500 12.500h4"/>`)}</label>
      ${app("Task View", ico(13, 13, svg`<path d="M0 1.500h8M.5 3.500h7v6h-7zM0 11.500h8M10.500 0v4.500M10.500 8v5M9 6.200h3" stroke="#ddd"/>`))}
      ${app("Edge", ico(16, 16, svg`<path d="M.5 7C1.200 2.500 4.500 0 8.500 0c4.500 0 7 3 7 7v2H5.200c.3 3.300 5.500 4 8.800 2v3.300c-5.500 3-12 1.200-12-5C2 7 3.300 5 5.500 4 3.500 4.300 1.700 5.300.5 7zM5.200 6.300h5.500C10.700 2.700 5.600 2.800 5.200 6.300z" fill="#0f7fdb" stroke="none"/>`), "open")}
      ${app("Store", ico(17, 17, svg`<path d="M0 4h17l-.8 12H.8z" fill="#f4f4f4" stroke="none"/><path d="M5.500 4.500V2.500a3 3 0 0 1 6 0v2" stroke="#ddd" stroke-width="1.200"/><path d="M4.500 6.500H8V10H4.500z" fill="#f25022" stroke="none"/><path d="M9 6.500h3.500V10H9z" fill="#7fba00" stroke="none"/><path d="M4.500 11H8v3.500H4.500z" fill="#00a4ef" stroke="none"/><path d="M9 11h3.500v3.500H9z" fill="#ffb900" stroke="none"/>`))}
      ${app("File Explorer", ico(17, 15, svg`<path d="M0 1h6l1.500 2H17v11H0z" fill="#f8dc85" stroke="none"/><path d="M0 4.500h17V6H0z" fill="#e9bf4a" stroke="none"/><path d="M3.500 14.500V9h10v5.500h-3V12h-4v2.500z" fill="#3ba7e0" stroke="none"/>`), "open")}
      ${app("Mail", ico(27, 18, svg`<path d="M0 5.500L9 0l9 5.500V15H0z" fill="#fff" stroke="none"/><path d="M.5 6l8.500 5 8.500-5L9 3z" fill="#20272a" stroke="none"/><rect x="11" y="6.500" width="15.500" height="11" rx="5.500" fill="#3a3f42" stroke="#aaa"/><text x="14" y="15.300" font-size="8.500" font-weight="700" fill="#fff" stroke="none">85</text>`))}
      ${app("CR", ico(18, 18, svg`<rect width="18" height="18" fill="#fff" stroke="none"/><text x=".5" y="14" font-size="13" fill="#e2447f" stroke="none" font-family="Lato">CR</text>`))}
      ${app("Excel", ico(17, 16, svg`<path d="M8 2h8.500v12H8z" fill="#fff" stroke="#1d7044"/><path d="M10 4.500h2M13.500 4.500h2M10 7h2M13.500 7h2M10 9.500h2M13.500 9.500h2M10 12h2M13.500 12h2" stroke="#1d7044" stroke-width="1.300"/><path d="M0 1.500L10 0v16L0 14.500z" fill="#1d7044" stroke="none"/><path d="M2.800 5l4 6M6.800 5l-4 6" stroke="#fff" stroke-width="1.500"/>`), "on")}
      <div class="tray">
        <button class="people" aria-label="People">${ico(12, 12, svg`<circle cx="8" cy="3" r="2.300"/><circle cx="3.500" cy="6" r="1.800"/><path d="M.5 11.500c.3-4.500 5.700-4.500 6 0M6.500 7c2-2 4.700-1.200 5 2"/>`)}</button>
        <button aria-label="Hidden icons">${chevron(9, 5, true)}</button>
        <button aria-label="OneDrive">${ico(13, 9, svg`<path d="M1 7.500C-.5 5 1.300 3.300 3 3.500 4 .5 8 0 9 3c3-.3 5 2.500 3 5z" fill="#fff" stroke="none"/><path d="M3.500 8.500C3.500 6 5 5.200 6.200 5.800 7 4 10 4 10.500 6" stroke="#111"/>`)}</button>
        <button aria-label="Volume">${ico(13, 11, svg`<path d="M.5 3.700h2L5 1.300v8.400L2.500 7.300h-2zM6.500 4c.8 1 .8 2 0 3M8.300 2.500c1.500 2 1.500 4 0 6M10.300 1c2.300 3 2.300 6 0 9" stroke-width=".9"/>`)}</button>
        <button aria-label="Windows Ink">${ico(13, 12, svg`<path d="M4 8.500L10.500 1.500 12 3 6 9.500 4 10zM4.500 5C2 5 .5 7 .5 9s2 3 4 2M9 6.500c2-1 3 .5 2 2s-3 .5-2.500-.5"/>`)}</button>
        <button class="clock"><span>1:22 PM</span><span>4/7/2019</span></button>
        <button aria-label="Action center">${ico(12, 12, svg`<path d="M0 0h12v9H8L6 12V9H0z" fill="#fff" stroke="none"/><path d="M2 2.500h8M2 4.500h8M2 6.500h5" stroke="#222" stroke-width=".9"/>`)}</button>
      </div>`;
  }
}

@customElement("app-root")
export class AppRoot extends LitElement {
  static styles = [base, css`
    :host { display: flex; flex-direction: column; height: 100vh; overflow: hidden; background: #fff; }
    .view { position: relative; flex: 1; min-height: 0; display: flex; }
    chegg-page { flex: 1; min-width: 0; }
    excel-window { position: absolute; left: 58px; right: 197px; top: 3px; bottom: 0; }
    .tip { position: absolute; right: 26px; top: 291px; width: 164px; height: 64px; padding: 8px 7px; background: #fff; border: 1px solid #e6e6e6; border-radius: 3px; font-family: Lato, sans-serif; font-size: 11px; line-height: 13px; color: #444; }
    .tip strong { display: block; margin-bottom: 8px; color: #ed7000; font-weight: 900; }
    .tail { position: absolute; right: 72px; top: 62px; }
  `];
  render() {
    return html`
      <edge-chrome></edge-chrome>
      <div class="view">
        <chegg-page></chegg-page>
        <excel-window></excel-window>
        <div class="tip" role="tooltip"><strong>New!</strong>Drag the corner to increase window size
          <svg class="tail" width="16" height="10" viewBox="0 0 16 10" aria-hidden="true"><path d="M0 0l8 9 8-9" fill="#fff" stroke="#e6e6e6" /></svg>
        </div>
      </div>
      <task-bar></task-bar>`;
  }
}
